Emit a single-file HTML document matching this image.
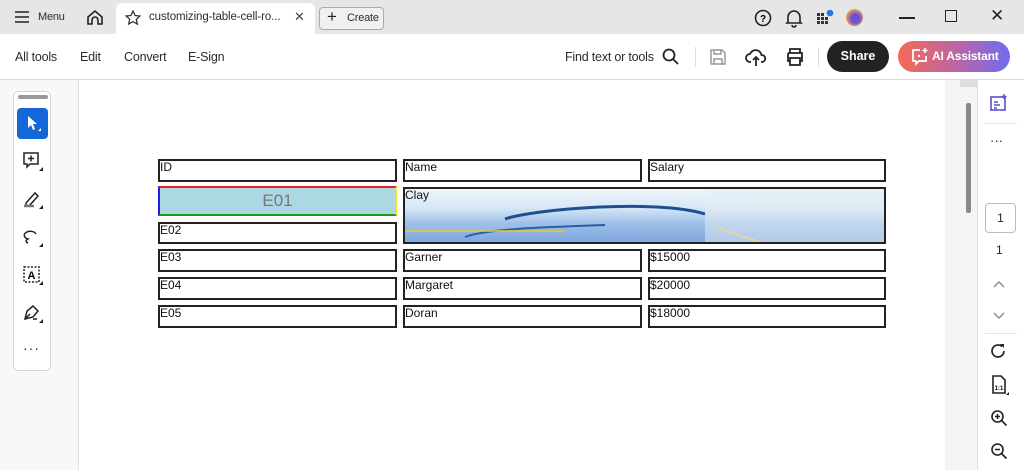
<!DOCTYPE html>
<html><head><meta charset="utf-8"><style>
*{box-sizing:border-box;margin:0;padding:0}
body{width:1024px;height:470px;overflow:hidden;background:#fff;font-family:"Liberation Sans",sans-serif;position:relative;color:#222}
.abs{position:absolute}
.title{left:0;top:0;width:1024px;height:34px;background:#e6e6e6}
.tb{left:0;top:34px;width:1024px;height:46px;background:#fff;border-bottom:1px solid #ddd}
.t{font-size:12.5px;color:#2c2c2c;letter-spacing:-0.2px}
.left{left:0;top:80px;width:79px;height:390px;background:#f8f8f8;border-right:1px solid #e0e0e0}
.panel{left:13px;top:91px;width:38px;height:280px;background:#fff;border:1px solid #d5d5d5;border-radius:5px}
.right{left:977px;top:80px;width:47px;height:390px;background:#fff;border-left:1px solid #e0e0e0}
.sb{left:945px;top:80px;width:32px;height:390px;background:#f4f4f4}
.cell{position:absolute;border:2px solid #222;font-size:12px;line-height:12px;padding:0;color:#111}
svg{position:absolute}
</style></head><body>
<div class="abs title"></div>
<svg style="left:14px;top:11px" width="16" height="12"><path d="M1 1h14M1 6h14M1 11h14" stroke="#222" stroke-width="1.6"/></svg>
<div class="abs t" style="left:38px;top:11px;font-size:11px">Menu</div>
<svg style="left:86px;top:9px" width="18" height="17"><path d="M2 8L9 2l7 6v7h-4v-4a3 3 0 0 0-6 0v4H2z" fill="none" stroke="#222" stroke-width="1.6"/></svg>
<div class="abs" style="left:116px;top:3px;width:199px;height:31px;background:#fff;border-radius:6px 6px 0 0"></div>
<svg style="left:125px;top:10px" width="16" height="16"><path d="M8 1l2.1 4.5 4.8.5-3.6 3.3 1 4.8L8 11.6 3.7 14l1-4.8L1.1 6l4.8-.5z" fill="none" stroke="#333" stroke-width="1.3"/></svg>
<div class="abs t" style="left:149px;top:11px;font-size:11.5px;letter-spacing:-0.1px">customizing-table-cell-ro...</div>
<div class="abs" style="left:294px;top:9px;font-size:13px;color:#444">✕</div>
<div class="abs" style="left:319px;top:7px;width:65px;height:23px;border:1px solid #aaa;border-radius:4px;background:#f0f0f0"></div>
<div class="abs" style="left:327px;top:7px;font-size:17px">+</div>
<div class="abs t" style="left:347px;top:12px;font-size:11px">Create</div>
<svg style="left:754px;top:9px" width="18" height="18"><circle cx="9" cy="9" r="7.5" fill="none" stroke="#222" stroke-width="1.6"/><text x="9" y="13" font-size="10" text-anchor="middle" font-weight="bold" font-family="Liberation Sans">?</text></svg>
<svg style="left:785px;top:8px" width="18" height="20"><path d="M3 14V9a6 6 0 0 1 12 0v5l1 1H2zM7 17a2 2 0 0 0 4 0" fill="none" stroke="#222" stroke-width="1.6"/></svg>
<svg style="left:816px;top:9px" width="20" height="18"><g fill="#333"><rect x="1" y="4" width="3" height="3"/><rect x="5" y="4" width="3" height="3"/><rect x="1" y="8" width="3" height="3"/><rect x="5" y="8" width="3" height="3"/><rect x="9" y="8" width="3" height="3"/><rect x="1" y="12" width="3" height="3"/><rect x="5" y="12" width="3" height="3"/><rect x="9" y="12" width="3" height="3"/></g><circle cx="14" cy="4" r="3.3" fill="#1f78e6"/></svg>
<div class="abs" style="left:846px;top:9px;width:17px;height:17px;border-radius:50%;background:radial-gradient(circle at 55% 55%,#6a4fd8 30%,#f0a050 70%)"></div>
<div class="abs" style="left:899px;top:17px;width:16px;height:1.5px;background:#222"></div>
<div class="abs" style="left:945px;top:10px;width:12px;height:12px;border:1.5px solid #222"></div>
<div class="abs" style="left:990px;top:6px;font-size:17px;color:#222">✕</div>

<div class="abs tb"></div>
<div class="abs t" style="left:15px;top:50px">All tools</div>
<div class="abs t" style="left:80px;top:50px">Edit</div>
<div class="abs t" style="left:124px;top:50px">Convert</div>
<div class="abs t" style="left:188px;top:50px">E-Sign</div>
<div class="abs t" style="left:565px;top:50px">Find text or tools</div>
<svg style="left:662px;top:48px" width="18" height="18"><circle cx="7" cy="7" r="5.5" fill="none" stroke="#222" stroke-width="1.8"/><path d="M11 11l5 5" stroke="#222" stroke-width="1.8"/></svg>
<div class="abs" style="left:695px;top:47px;width:1px;height:20px;background:#ddd"></div>
<svg style="left:709px;top:48px" width="18" height="18"><path d="M2 2h11l3 3v11H2z M5 2v4h7V2 M5 16v-5h8v5" fill="none" stroke="#999" stroke-width="1.5"/></svg>
<svg style="left:745px;top:46px" width="22" height="22"><path d="M6 16H5a4 4 0 0 1 0-8 6 6 0 0 1 11.5 1A3.5 3.5 0 0 1 17 16h-1M11 20v-9M8 14l3-3 3 3" fill="none" stroke="#222" stroke-width="1.8"/></svg>
<svg style="left:785px;top:47px" width="20" height="20"><path d="M5 6V2h10v4M3 6h14v8h-2M5 14H3V6M5 11h10v7H5z" fill="none" stroke="#222" stroke-width="1.8"/></svg>
<div class="abs" style="left:818px;top:47px;width:1px;height:20px;background:#ddd"></div>
<div class="abs" style="left:827px;top:41px;width:62px;height:31px;border-radius:16px;background:#222;color:#fff;font-size:12.5px;font-weight:bold;text-align:center;line-height:31px">Share</div>
<div class="abs" style="left:898px;top:41px;width:112px;height:31px;border-radius:16px;background:linear-gradient(90deg,#f46a55,#b865a8 55%,#6f6df0);color:#fff;font-size:12px;font-weight:bold;line-height:31px;padding-left:34px;letter-spacing:-0.2px;white-space:nowrap">AI Assistant</div>
<svg style="left:910px;top:47px" width="20" height="20"><path d="M10 3H3v11h3v3l3-3h7V9" fill="none" stroke="#fff" stroke-width="1.7"/><path d="M15 1v5M12.5 3.5h5" stroke="#fff" stroke-width="1.5"/><circle cx="9" cy="9" r="1.2" fill="#fff"/></svg>

<div class="abs left"></div>
<div class="abs panel"></div>
<div class="abs" style="left:18px;top:95px;width:30px;height:4px;border-radius:2px;background:#999"></div>
<div class="abs" style="left:17px;top:108px;width:31px;height:31px;border-radius:4px;background:#1467d8"></div>
<svg style="left:25px;top:114px" width="16" height="18"><path d="M3 2v12l3-3 2 5 2-1-2-5h4z" fill="#fff"/><path d="M13 17h3v-3z" fill="#fff"/></svg>
<svg style="left:22px;top:151px" width="22" height="22"><path d="M2 2h14v11H8l-3 3v-3H2z" fill="none" stroke="#222" stroke-width="1.5"/><path d="M9 4.5v6M6 7.5h6" stroke="#222" stroke-width="1.5"/><path d="M17 20h4v-4z" fill="#222"/></svg>
<svg style="left:22px;top:189px" width="22" height="22"><path d="M4 14l9-10 3 3-9 10H4z" fill="none" stroke="#222" stroke-width="1.5"/><path d="M2 17h10" stroke="#777" stroke-width="2.5"/><path d="M17 20h4v-4z" fill="#222"/></svg>
<svg style="left:22px;top:227px" width="22" height="22"><path d="M14 7a6 4 0 1 0-8 5c-2 1-3 3 0 4" fill="none" stroke="#222" stroke-width="1.5"/><path d="M17 20h4v-4z" fill="#222"/></svg>
<svg style="left:22px;top:265px" width="22" height="22"><rect x="2" y="2" width="15" height="15" fill="none" stroke="#222" stroke-width="1.5" stroke-dasharray="2 1.5"/><text x="9.5" y="14" font-size="11" text-anchor="middle" font-weight="bold" font-family="Liberation Sans">A</text><path d="M17 20h4v-4z" fill="#222"/></svg>
<svg style="left:22px;top:303px" width="22" height="22"><path d="M3 16l2-8 6-5 5 5-5 6z M3 16l5-5" fill="none" stroke="#222" stroke-width="1.5"/><path d="M11 16h4" stroke="#222" stroke-width="1.5"/><path d="M17 20h4v-4z" fill="#222"/></svg>
<div class="abs" style="left:23px;top:340px;font-size:14px;letter-spacing:1px">···</div>

<div class="cell" style="left:158px;top:159px;width:239px;height:23px">ID</div>
<div class="cell" style="left:403px;top:159px;width:239px;height:23px">Name</div>
<div class="cell" style="left:648px;top:159px;width:238px;height:23px">Salary</div>
<div class="abs" style="left:158px;top:186px;width:239px;height:30px;background:#acd8e4;border-top:2px solid #e82020;border-bottom:2px solid #1a9a1a;border-left:2px solid #2020e0;border-right:2px solid #f0e020;text-align:center;font-size:17px;line-height:26px;color:#777">E01</div>
<div class="cell" style="left:403px;top:187px;width:483px;height:57px;background:linear-gradient(180deg,#eef5fb 0%,#d8e8f6 35%,#9ec0e8 65%,#7fa6df 100%);overflow:hidden">
<svg style="left:0;top:0" width="483" height="57"><path d="M100 30c30-10 150-20 200-5" fill="none" stroke="#1f4f8f" stroke-width="3"/><path d="M60 48c20-8 80-10 140-12" fill="none" stroke="#2a5fa8" stroke-width="2"/><path d="M0 42h160M310 38l60 20" stroke="#e8c830" stroke-width="1.5"/><rect x="300" y="0" width="183" height="57" fill="#e6eef4" opacity=".5"/></svg>
<span style="position:relative">Clay</span></div>
<div class="cell" style="left:158px;top:222px;width:239px;height:22px">E02</div>
<div class="cell" style="left:158px;top:249px;width:239px;height:23px">E03</div>
<div class="cell" style="left:403px;top:249px;width:239px;height:23px">Garner</div>
<div class="cell" style="left:648px;top:249px;width:238px;height:23px">$15000</div>
<div class="cell" style="left:158px;top:277px;width:239px;height:23px">E04</div>
<div class="cell" style="left:403px;top:277px;width:239px;height:23px">Margaret</div>
<div class="cell" style="left:648px;top:277px;width:238px;height:23px">$20000</div>
<div class="cell" style="left:158px;top:305px;width:239px;height:23px">E05</div>
<div class="cell" style="left:403px;top:305px;width:239px;height:23px">Doran</div>
<div class="cell" style="left:648px;top:305px;width:238px;height:23px">$18000</div>

<div class="abs sb"></div>
<div class="abs" style="left:960px;top:80px;width:17px;height:7px;background:#ddd"></div>
<div class="abs" style="left:966px;top:103px;width:5px;height:110px;background:#888;border-radius:2px"></div>
<div class="abs right"></div>
<svg style="left:989px;top:93px" width="20" height="20"><rect x="2" y="4" width="14" height="13" fill="none" stroke="#5a4fd0" stroke-width="1.6"/><path d="M5 9h4M5 12h6M5 15h3" stroke="#5a4fd0" stroke-width="1.5"/><path d="M15 1v5M12.5 3.5h5" stroke="#5a4fd0" stroke-width="1.4"/></svg>
<div class="abs" style="left:985px;top:123px;width:32px;height:1px;background:#e3e3e3"></div>
<div class="abs" style="left:990px;top:133px;font-size:13px">···</div>
<div class="abs" style="left:985px;top:203px;width:31px;height:30px;border:1px solid #bbb;border-radius:4px;font-size:12px;text-align:center;line-height:28px">1</div>
<div class="abs" style="left:996px;top:243px;font-size:12px">1</div>
<svg style="left:992px;top:279px" width="14" height="10"><path d="M2 8l5-5 5 5" fill="none" stroke="#999" stroke-width="1.6"/></svg>
<svg style="left:992px;top:311px" width="14" height="10"><path d="M2 2l5 5 5-5" fill="none" stroke="#999" stroke-width="1.6"/></svg>
<div class="abs" style="left:985px;top:333px;width:32px;height:1px;background:#e3e3e3"></div>
<svg style="left:990px;top:342px" width="18" height="18"><path d="M14 9a6 6 0 1 1-2-4.5" fill="none" stroke="#222" stroke-width="1.7"/><path d="M10 2h4v4z" fill="#222"/></svg>
<svg style="left:990px;top:374px" width="20" height="22"><path d="M3 2h8l4 4v13H3z" fill="none" stroke="#222" stroke-width="1.6"/><text x="9" y="16" font-size="6" text-anchor="middle" font-family="Liberation Sans" font-weight="bold">1:1</text><path d="M16 21h3v-3z" fill="#222"/></svg>
<svg style="left:990px;top:409px" width="18" height="18"><circle cx="7.5" cy="7.5" r="5.5" fill="none" stroke="#222" stroke-width="1.6"/><path d="M11.5 11.5l5 5M5 7.5h5M7.5 5v5" stroke="#222" stroke-width="1.6"/></svg>
<svg style="left:990px;top:442px" width="18" height="18"><circle cx="7.5" cy="7.5" r="5.5" fill="none" stroke="#222" stroke-width="1.6"/><path d="M11.5 11.5l5 5M5 7.5h5" stroke="#222" stroke-width="1.6"/></svg>
</body></html>
